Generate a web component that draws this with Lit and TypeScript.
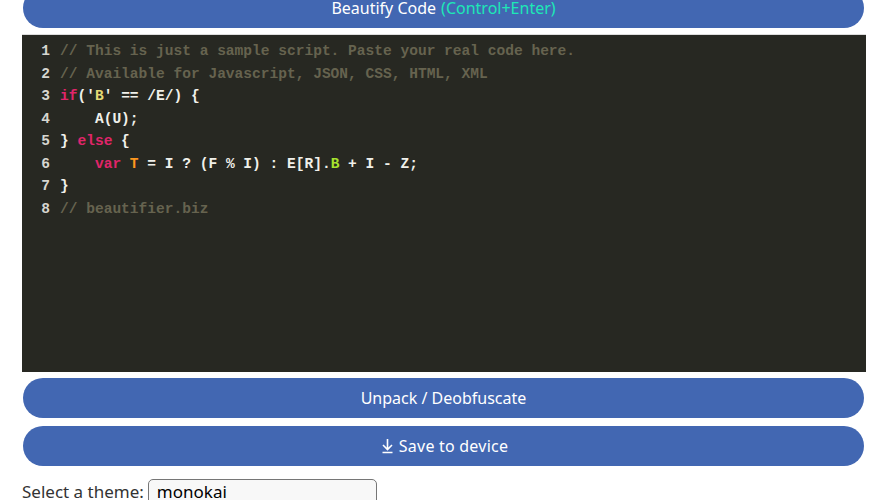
import { LitElement, html, css } from "lit";
import { customElement } from "lit/decorators.js";

type Tok = [string, string?];
const LINES: Tok[][] = [
  [["// This is just a sample script. Paste your real code here.", "c"]],
  [["// Available for Javascript, JSON, CSS, HTML, XML", "c"]],
  [["if", "k"], ["('"], ["B", "s"], ["' == /E/) {"]],
  [["    A(U);"]],
  [["} "], ["else", "k"], [" {"]],
  [["    "], ["var", "k"], [" "], ["T", "o"], [" = I ? (F % I) : E[R]."], ["B", "g"], [" + I - Z;"]],
  [["}"]],
  [["// beautifier.biz", "c"]],
];

@customElement("app-root")
export class AppRoot extends LitElement {
  static styles = css`
    :host {
      display: block;
      height: 500px;
      overflow: hidden;
      background: #fff;
      font-family: "Noto Sans", sans-serif;
      color: #333;
    }
    .page {
      display: flex;
      flex-direction: column;
      margin: -12px 22px 0 22px;
    }
    .btn {
      display: flex;
      align-items: center;
      justify-content: center;
      gap: 5px;
      height: 40px;
      margin: 0 2px 0 1px;
      border-radius: 20px;
      background: #4267b2;
      color: #fff;
      font-size: 16px;
      white-space: pre;
    }
    .hint { color: #1de9b6; }
    .save { padding-left: 2px; }
    .wide { letter-spacing: 0.22px; }
    .editor {
      height: 338px;
      margin: 6px 0 6px;
      padding: 5px 0 0;
      box-sizing: border-box;
      background: #272822;
      border-top: 1px solid #ddd;
      font-family: "Liberation Mono", monospace;
      font-size: 14.55px;
      line-height: 22.57px;
      color: #f0f0ea;
      font-weight: 700;
    }
    .line { display: flex; white-space: pre; }
    .num { width: 38px; padding-right: 10px; box-sizing: border-box; text-align: right; color: #d6d6d0; }
    .c { color: #66634f; }
    .k { color: #e0256a; }
    .s { color: #e6db74; }
    .o { color: #fd971f; }
    .g { color: #a6e22e; }
    .gap { height: 8px; }
    .theme {
      display: flex;
      align-items: flex-start;
      gap: 4px;
      margin-top: 13px;
      font-size: 17px;
      line-height: 24px;
    }
    .label { margin-top: 1px; }
    .select {
      width: 229px;
      height: 40px;
      padding: 0 8px;
      box-sizing: border-box;
      border: 1px solid #767676;
      border-radius: 5px;
      background: #f8f8f8;
      color: #000;
      font-size: 17px;
      line-height: 24px;
    }
    svg { display: block; }
  `;

  render() {
    return html`<div class="page">
      <div class="btn"><span>Beautify Code</span><span class="hint">(Control+Enter)</span></div>
      <div class="editor">
        ${LINES.map(
          (l, i) => html`<div class="line"><span class="num">${i + 1}</span><span>${l.map(
            ([t, c]) => html`<span class=${c ?? ""}>${t}</span>`
          )}</span></div>`
        )}
      </div>
      <div class="btn">Unpack / Deobfuscate</div>
      <div class="gap"></div>
      <div class="btn save">
        <svg width="13" height="16" viewBox="0 0 13 16" fill="none" stroke="#fff" stroke-width="1.6">
          <path d="M6.5 1V11M2 7l4.5 4.5L11 7M1.5 14.5h10" />
        </svg>
        <span class="wide">Save to device</span>
      </div>
      <div class="theme">
        <span class="label">Select a theme:</span>
        <div class="select">monokai</div>
      </div>
    </div>`;
  }
}
